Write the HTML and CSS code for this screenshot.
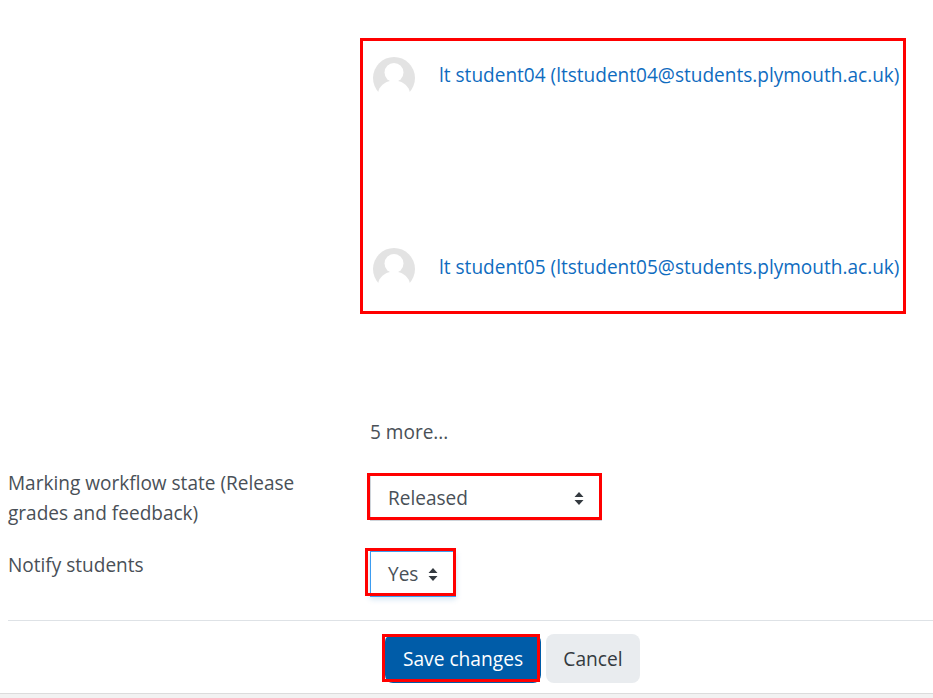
FILE: index.html
```html
<!DOCTYPE html>
<html>
  <head>
    <title>Grading batch operation</title>
    <meta charset="UTF-8" />
    <link rel="stylesheet" href="styles.css">
  </head>
  <body>
    <form class="page">
      <div class="row users-row">
        <div class="label"></div>
        <div class="field">
          <div class="annotated users-box">
            <div class="user">
              <svg class="avatar" viewBox="0 0 42 42"><circle cx="21" cy="21" r="21" fill="#e3e3e3"/><circle cx="21" cy="15.5" r="9.5" fill="#fff"/><path d="M5 36c1-7 7-11 12-12h8c5 1 11 5 12 12l-7 6H12z" fill="#fff"/></svg>
              <a href="#" class="user-link">lt student04 (ltstudent04@students.plymouth.ac.uk)</a>
            </div>
            <div class="user">
              <svg class="avatar" viewBox="0 0 42 42"><circle cx="21" cy="21" r="21" fill="#e3e3e3"/><circle cx="21" cy="15.5" r="9.5" fill="#fff"/><path d="M5 36c1-7 7-11 12-12h8c5 1 11 5 12 12l-7 6H12z" fill="#fff"/></svg>
              <a href="#" class="user-link">lt student05 (ltstudent05@students.plymouth.ac.uk)</a>
            </div>
          </div>
          <div class="more">5 more...</div>
        </div>
      </div>

      <div class="row workflow-row">
        <label class="label">Marking workflow state (Release grades and feedback)</label>
        <div class="field">
          <div class="select select-wide">
            <span>Released</span>
            <svg class="arrows" viewBox="0 0 10 13"><path d="M5 0l4.5 5h-9zM5 13L.5 8h9z" fill="#343a40"/></svg>
            <div class="mark mark-wide"></div>
          </div>
        </div>
      </div>

      <div class="row notify-row">
        <label class="label">Notify students</label>
        <div class="field">
          <div class="select select-small">
            <span>Yes</span>
            <svg class="arrows" viewBox="0 0 10 13"><path d="M5 0l4.5 5h-9zM5 13L.5 8h9z" fill="#343a40"/></svg>
            <div class="mark mark-small"></div>
          </div>
        </div>
      </div>

      <div class="actions">
        <button type="button" class="btn btn-primary">Save changes<span class="mark mark-save"></span></button>
        <button type="button" class="btn btn-secondary">Cancel</button>
      </div>
    </form>
    <div class="page-end"></div>
  </body>
</html>
```

FILE: styles.css
```css
html,
body {
  margin: 0;
  padding: 0;
}

body {
  height: 698px;
  overflow: hidden;
  background-color: #fff;
  color: #495057;
  font-family: "Open Sans", "Noto Sans", sans-serif;
  font-size: 19.05px;
  line-height: 30px;
  display: flex;
  flex-direction: column;
}

.page {
  flex: 1;
  padding: 0 0 0 8px;
}

.row {
  display: flex;
}

.label {
  width: 362px;
  flex: none;
  padding-right: 50px;
  box-sizing: border-box;
}

.field {
  flex: 1;
}

.users-row {
  padding-top: 38px;
}

.annotated {
  position: relative;
}

.users-box {
  width: 546px;
  height: 276px;
  margin-left: -10px;
  border: 3px solid #f00;
  box-sizing: border-box;
}

.user {
  display: flex;
  align-items: flex-start;
  height: 42px;
  margin: 16px 0 0 10px;
  gap: 24px;
}

.user + .user {
  margin-top: 149px;
}

.user + .user .user-link {
  padding-top: 4px;
}

.avatar {
  width: 42px;
  height: 42px;
  flex: none;
}

.user-link {
  padding-top: 3px;
  color: #0f6cbf;
  text-decoration: none;
  white-space: nowrap;
}

.more {
  margin-top: 103px;
}

.workflow-row {
  margin-top: 21px;
}

.notify-row {
  margin-top: 22px;
}

.select {
  position: relative;
  display: flex;
  align-items: center;
  justify-content: space-between;
  box-sizing: border-box;
  height: 46px;
  padding: 0 17px;
  background-color: #fff;
  border: 1px solid #ced4da;
}

.select-wide {
  width: 232px;
  margin-top: 7px;
}

.select-small {
  width: 86px;
  margin-top: 1px;
  border-color: #3d9cf0;
  box-shadow: 0 2px 6px rgba(15, 108, 191, 0.2);
}

.arrows {
  width: 10px;
  height: 13px;
  flex: none;
}

.mark {
  position: absolute;
  box-sizing: border-box;
  border: 3px solid #f00;
}

.mark-wide {
  left: -4px;
  top: -3px;
  width: 235px;
  height: 47px;
}

.mark-small {
  left: -6px;
  top: -4px;
  width: 91px;
  height: 48px;
}

.mark-save {
  left: -3px;
  top: 0;
  width: 158px;
  height: 48px;
}

.actions {
  display: flex;
  justify-content: flex-start;
  gap: 5px;
  margin: 23px 0 0;
  padding: 13px 0 0 377px;
  border-top: 1px solid #dee2e6;
}

.btn {
  position: relative;
  height: 49px;
  border: none;
  border-radius: 8px;
  font-family: inherit;
  font-size: 19.2px;
  padding: 0;
}

.btn-primary {
  width: 156px;
  background-color: #005ca8;
  color: #fff;
}

.btn-secondary {
  width: 94px;
  background-color: #e9ecef;
  color: #343a40;
}

.page-end {
  height: 4px;
  flex: none;
  background-color: #f2f2f2;
  border-top: 1px solid #dcdcdc;
}
```
